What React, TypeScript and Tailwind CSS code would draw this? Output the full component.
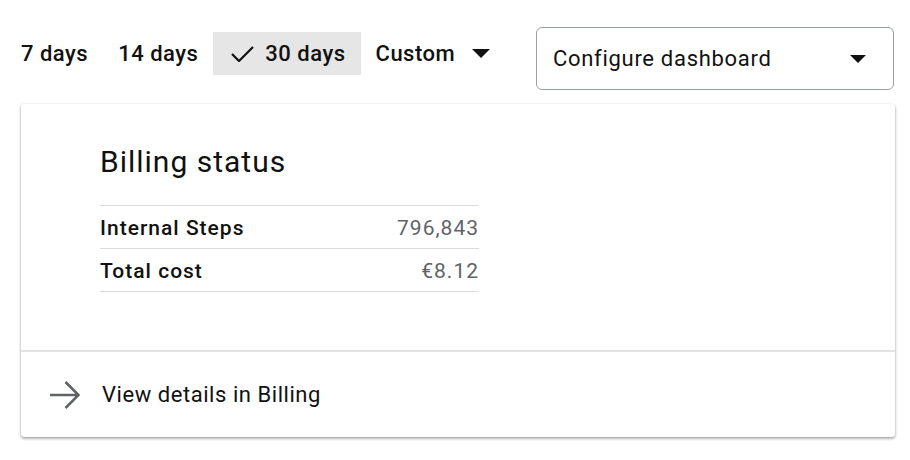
import React from 'react'

const ranges = ['7 days', '14 days', '30 days', 'Custom']

function Caret({ className }: { className?: string }) {
  return (
    <svg className={className} viewBox="0 0 18 9" fill="currentColor">
      <path d="M0 0h18L9 9z" />
    </svg>
  )
}

function Check() {
  return (
    <svg width="23" height="16" viewBox="0 0 23 16" fill="none" stroke="currentColor" strokeWidth="2.2">
      <path d="M1 8l7 7L22 1" />
    </svg>
  )
}

function ArrowForward() {
  return (
    <svg width="30" height="28" viewBox="0 0 30 28" fill="none" stroke="#5f6368" strokeWidth="2.6">
      <path d="M0 14h28M15.5 1l13 13-13 13" />
    </svg>
  )
}

const rows = [
  { label: 'Internal Steps', value: '796,843' },
  { label: 'Total cost', value: '€8.12' },
]

export default function App() {
  return (
    <div className="w-[910px] h-[460px] bg-white text-[#111111]" style={{ fontFamily: 'Roboto, "Liberation Sans", sans-serif' }}>
      <div className="flex items-start justify-between pl-[6px] pr-[16px]">
        <div className="flex mt-[32px]">
          {ranges.map((r) => {
            const active = r === '30 days'
            return (
              <button
                key={r}
                className={`flex items-center h-[43px] px-[15px] text-[22px] font-medium tracking-[0.5px] ${active ? 'bg-[#e6e6e6]' : ''}`}
              >
                {active && (
                  <span className="ml-[3px] mr-[11px] mt-[1px]">
                    <Check />
                  </span>
                )}
                {r}
                {r === 'Custom' && <Caret className="w-[18px] h-[9px] ml-[17px]" />}
              </button>
            )
          })}
        </div>
        <div className="mt-[27px] w-[358px] h-[63px] border border-[#9aa0a6] rounded-[6px] flex items-center justify-between pl-[16px] pr-[27px] text-[22px] tracking-[0.7px]">
          <span>Configure dashboard</span>
          <Caret className="w-[16px] h-[8px]" />
        </div>
      </div>

      <div className="mt-[14px] ml-[21px] w-[874px] bg-white rounded-[3px] shadow-[0_1px_3px_rgba(0,0,0,0.3),0_2px_3px_rgba(0,0,0,0.15)]">
        <div className="h-[246px] pl-[79px] pt-[40px]">
          <h2 className="text-[30px] leading-[36px] font-normal tracking-[1px]">Billing status</h2>
          <div className="mt-[25px] w-[379px] border-t border-[#dcdcdc]">
            {rows.map((row) => (
              <div key={row.label} className="flex items-center justify-between h-[43px] pt-[3px] border-b border-[#dcdcdc] text-[21px] tracking-[1px]">
                <span className="font-medium">{row.label}</span>
                <span className="text-[#5f6368]">{row.value}</span>
              </div>
            ))}
          </div>
        </div>
        <div className="h-[87px] border-t-2 border-[#e3e3e3] flex items-center pl-[29px]">
          <ArrowForward />
          <span className="ml-[22px] text-[22px] tracking-[0.55px]">View details in Billing</span>
        </div>
      </div>
    </div>
  )
}
